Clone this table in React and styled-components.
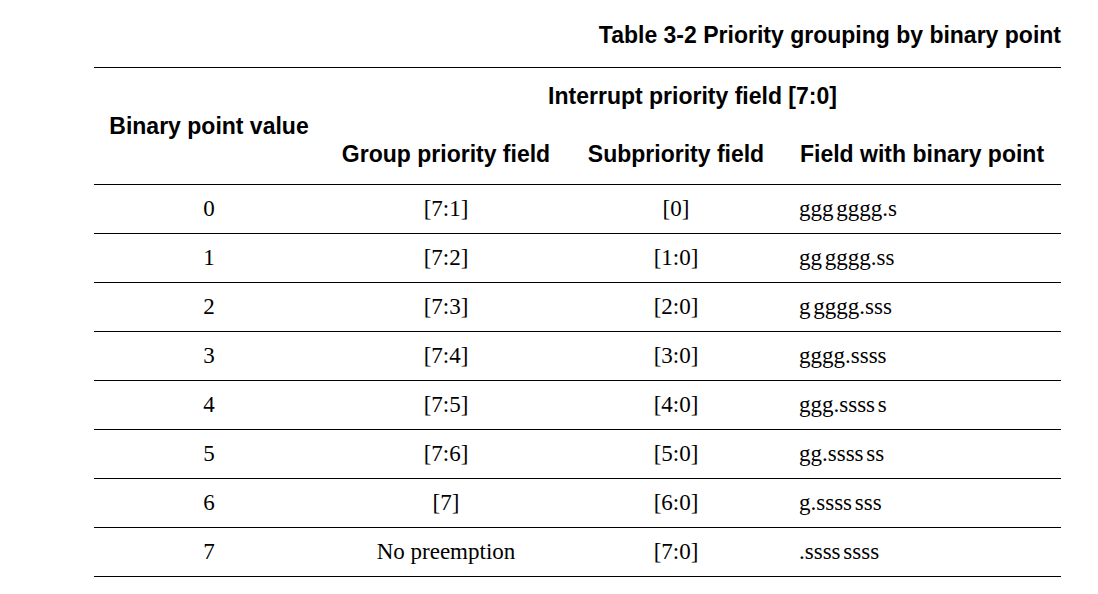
import React from "react";
import styled, { createGlobalStyle } from "styled-components";

const GlobalStyle = createGlobalStyle`
  body {
    margin: 0;
    background: #fff;
    color: #000;
  }
`;

const rows = [
  { value: "0", group: "[7:1]", sub: "[0]", field: "ggg gggg.s" },
  { value: "1", group: "[7:2]", sub: "[1:0]", field: "gg gggg.ss" },
  { value: "2", group: "[7:3]", sub: "[2:0]", field: "g gggg.sss" },
  { value: "3", group: "[7:4]", sub: "[3:0]", field: "gggg.ssss" },
  { value: "4", group: "[7:5]", sub: "[4:0]", field: "ggg.ssss s" },
  { value: "5", group: "[7:6]", sub: "[5:0]", field: "gg.ssss ss" },
  { value: "6", group: "[7]", sub: "[6:0]", field: "g.ssss sss" },
  { value: "7", group: "No preemption", sub: "[7:0]", field: ".ssss ssss" },
];

const App = () => {
  return (
    <Page>
      <GlobalStyle />
      <Title>Table 3-2 Priority grouping by binary point</Title>
      <Table>
        <HeadCell $rowSpan $bordered>Binary point value</HeadCell>
        <HeadCell $span>Interrupt priority field [7:0]</HeadCell>
        <HeadCell $bordered>Group priority field</HeadCell>
        <HeadCell $bordered>Subpriority field</HeadCell>
        <HeadCell $bordered $left>Field with binary point</HeadCell>
        {rows.map((r) => (
          <React.Fragment key={r.value}>
            <Cell>{r.value}</Cell>
            <Cell>{r.group}</Cell>
            <Cell>{r.sub}</Cell>
            <Cell $left $tight>{r.field}</Cell>
          </React.Fragment>
        ))}
      </Table>
    </Page>
  );
};

const Page = styled.div`
  width: 967px;
  padding: 22px 0 0 94px;
`;

const Title = styled.div`
  font-family: "Liberation Sans", Arial, sans-serif;
  font-weight: 700;
  font-size: 23px;
  line-height: 26px;
  text-align: right;
  margin-bottom: 19px;
`;

const Table = styled.div`
  display: grid;
  grid-template-columns: 230px 244px 216px 277px;
  grid-template-rows: 56px 61px;
  grid-auto-rows: 49px;
  border-top: 1px solid #000;
`;

const HeadCell = styled.div`
  box-sizing: border-box;
  display: flex;
  align-items: center;
  justify-content: ${(p) => (p.$left ? "flex-start" : "center")};
  padding-left: ${(p) => (p.$left ? "16px" : "0")};
  font-family: "Liberation Sans", Arial, sans-serif;
  font-weight: 700;
  font-size: 23px;
  white-space: nowrap;
  grid-row: ${(p) => (p.$rowSpan ? "1 / 3" : "auto")};
  grid-column: ${(p) => (p.$span ? "2 / 5" : "auto")};
  border-bottom: ${(p) => (p.$bordered ? "1px solid #000" : "none")};
`;

const Cell = styled.div`
  box-sizing: border-box;
  display: flex;
  align-items: center;
  justify-content: ${(p) => (p.$left ? "flex-start" : "center")};
  padding-left: ${(p) => (p.$left ? "15px" : "0")};
  font-family: "Liberation Serif", "Times New Roman", serif;
  font-size: 23px;
  white-space: pre;
  word-spacing: ${(p) => (p.$tight ? "-3px" : "normal")};
  border-bottom: 1px solid #000;
`;

export default App;
